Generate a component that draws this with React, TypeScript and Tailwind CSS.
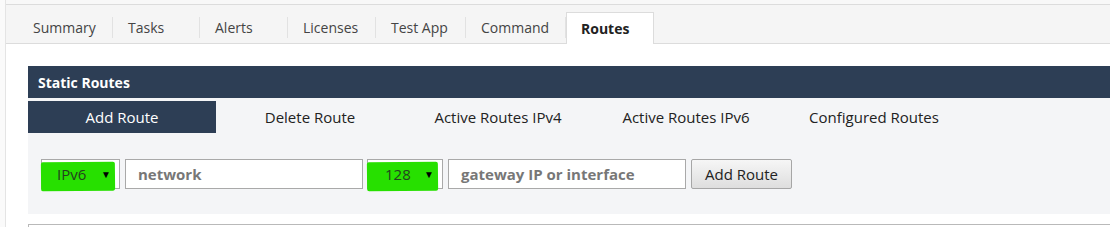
import React from 'react';

// Top navigation tabs, widths follow the separators in the original page
const tabs = [
  { label: 'Summary', width: 'w-[95px]' },
  { label: 'Tasks', width: 'w-[87px]' },
  { label: 'Alerts', width: 'w-[88px]' },
  { label: 'Licenses', width: 'w-[88px]' },
  { label: 'Test App', width: 'w-[90px]' },
  { label: 'Command', width: 'w-[100px]' },
];

const subTabs = ['Add Route', 'Delete Route', 'Active Routes IPv4', 'Active Routes IPv6', 'Configured Routes'];

/**
 * Select box with a green highlighter stroke drawn over it
 */
const MarkedSelect: React.FC<{ value: string; width: string; textPad: string }> = ({ value, width, textPad }) => (
  <div className={`relative h-[30px] ${width} bg-white border border-[#a9a9a9]`}>
    <div className="absolute left-[-1px] top-[2px] right-[4px] h-[29px] bg-[#27e000] rounded-[2px] -rotate-[0.6deg]" />
    <div className={`relative flex h-full items-center ${textPad} text-[15px] text-[#24401f]`}>
      <span>{value}</span>
      <span className="ml-auto mr-[8px] text-[10px] text-black">▼</span>
    </div>
  </div>
);

export default function App() {
  return (
    <div className="flex min-h-[227px] bg-white font-['Open_Sans','Noto_Sans',sans-serif] overflow-hidden">
      {/* left gutter line */}
      <div className="w-[6px] shrink-0 bg-[#fafafa] border-r border-[#e4e4e4]" />

      <div className="flex-1 flex flex-col">
        <div className="h-[4px] bg-[#f8f8f8]" />

        {/* Tab bar */}
        <div className="flex h-[40px] items-end pl-[12px] bg-[#f5f5f5] border-y border-[#dcdcdc]">
          {tabs.map(tab => (
            <div key={tab.label} className={`flex h-full items-center pt-[7px] ${tab.width}`}>
              <span className="pl-[15px] text-[14px] text-[#444]">{tab.label}</span>
              <div className="ml-auto h-[21px] w-px bg-[#e2e2e2]" />
            </div>
          ))}
          <div className="-mb-px flex h-[32px] w-[88px] items-center bg-white border-x border-t border-[#dcdcdc] pl-[14px] text-[14px] font-bold text-[#222]">
            Routes
          </div>
        </div>

        {/* Static routes panel */}
        <div className="mt-[22px] ml-[22px]">
          <div className="flex h-[32px] items-center bg-[#2d3e55] pl-[10px] text-[14px] font-bold text-white">
            Static Routes
          </div>
          <div className="bg-[#f4f5f7] pb-[25px]">
            <div className="flex pt-[3px]">
              {subTabs.map((label, i) => (
                <div
                  key={label}
                  className={`flex h-[32px] w-[188px] items-center justify-center text-[15px] ${
                    i === 0 ? 'bg-[#2d3e55] text-white' : 'text-[#222]'
                  }`}
                >
                  {label}
                </div>
              ))}
            </div>

            <div className="flex items-center mt-[26px] pl-[13px]">
              <MarkedSelect value="IPv6" width="w-[79px]" textPad="pl-[15px]" />
              <div className="ml-[5px] flex h-[30px] w-[238px] items-center bg-white border border-[#a9a9a9] pl-[12px] text-[15px] font-bold text-[#777]">
                network
              </div>
              <div className="ml-[4px]">
                <MarkedSelect value="128" width="w-[76px]" textPad="pl-[17px]" />
              </div>
              <div className="ml-[5px] flex h-[30px] w-[238px] items-center bg-white border border-[#a9a9a9] pl-[12px] text-[15px] font-bold text-[#777]">
                gateway IP or interface
              </div>
              <button className="ml-[5px] h-[30px] w-[101px] rounded-[2px] border border-[#a6a6a6] bg-gradient-to-b from-[#f6f6f6] to-[#dedede] text-[15px] text-[#222]">
                Add Route
              </button>
            </div>
          </div>

          {/* next box begins below */}
          <div className="mt-[10px] h-[10px] border-t border-l border-[#b9b9b9]" />
        </div>
      </div>
    </div>
  );
}
